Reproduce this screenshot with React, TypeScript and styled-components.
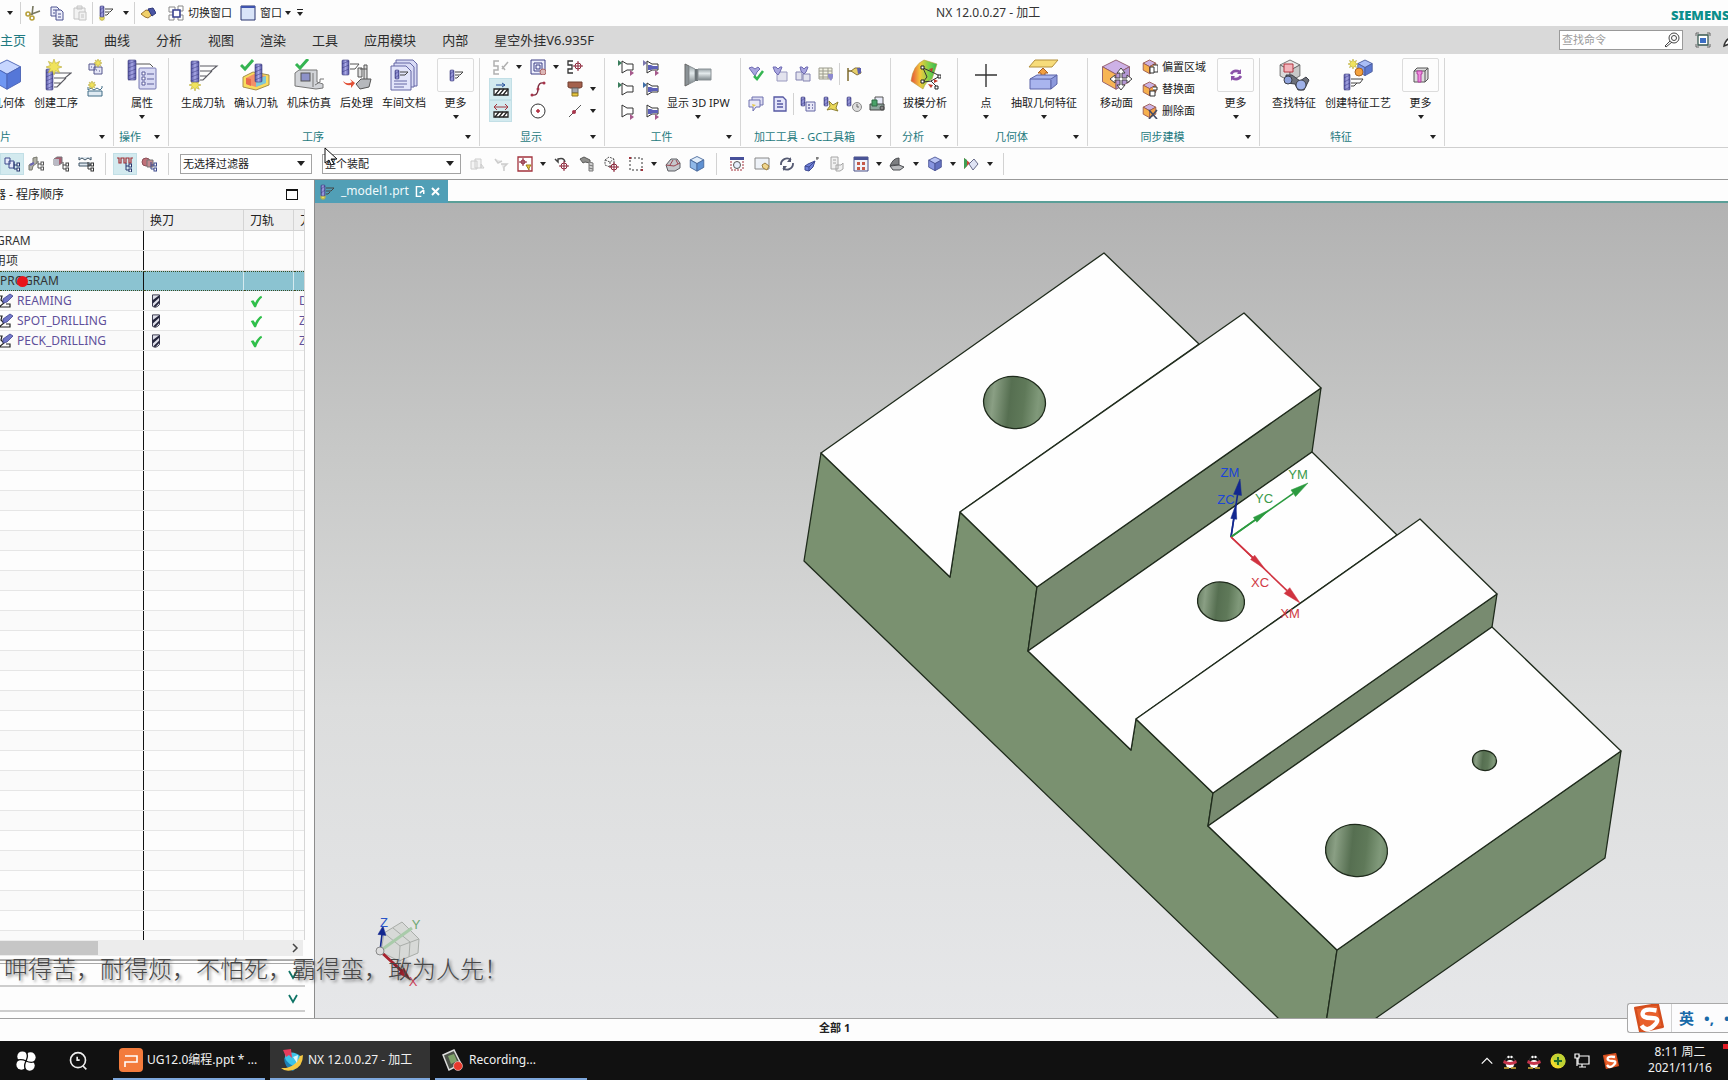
import React from "react";
import styled, { createGlobalStyle, css } from "styled-components";

const teal = "#1f7a80";
const ink = "#222";

const GlobalStyle = createGlobalStyle`
  * { box-sizing: border-box; }
  body {
    margin: 0;
    font-family: "Noto Sans", "Noto Sans CJK SC", sans-serif;
    font-size: 11px;
    line-height: 16px;
    color: ${ink};
    background: #fdfdfd;
  }
  button, input, select { font: inherit; color: inherit; }
`;

/* ---------- icons ---------- */

const Drill = ({ x, y, w = 7, h = 18 }: { x: number; y: number; w?: number; h?: number }) => (
  <g>
    <rect x={x} y={y} width={w} height={h} rx="1" fill="url(#steel)" stroke="#3d3d7c" strokeWidth=".6" />
    {Array.from({ length: Math.floor(h / 4) }, (_, i) => (
      <path key={i} d={`M${x} ${y + 4 + i * 4}l${w}-3`} stroke="#34347a" strokeWidth=".8" opacity=".6" />
    ))}
  </g>
);

const Path3 = ({ x, y }: { x: number; y: number }) => (
  <path
    d={`M${x} ${y}h17l-6 5h-11M${x + 12} ${y + 5}l-5 5h-7M${x + 7} ${y + 10}l-4 4h-3`}
    fill="none"
    stroke="#5a5a62"
    strokeWidth="1.1"
  />
);

const Star = ({ x, y, r = 6 }: { x: number; y: number; r?: number }) => {
  const pts = Array.from({ length: 16 }, (_, i) => {
    const a = (i * Math.PI) / 8;
    const q = i % 2 ? r * 0.5 : r;
    return `${x + q * Math.cos(a)},${y + q * Math.sin(a)}`;
  }).join(" ");
  return <polygon points={pts} fill="#f0e35c" stroke="#b9ab3a" strokeWidth=".6" />;
};

const Cube = ({ x, y, s, a, b, c, o = "#666" }: { x: number; y: number; s: number; a: string; b: string; c: string; o?: string }) => (
  <g stroke={o} strokeWidth=".9" strokeLinejoin="round">
    <path d={`M${x} ${y - s}l${s * 0.9} ${s * 0.45}l-${s * 0.9} ${s * 0.5}l-${s * 0.9}-${s * 0.5}z`} fill={a} />
    <path d={`M${x - s * 0.9} ${y - s * 0.55}v${s}l${s * 0.9} ${s * 0.5}v-${s}z`} fill={b} />
    <path d={`M${x + s * 0.9} ${y - s * 0.55}v${s}l-${s * 0.9} ${s * 0.5}v-${s}z`} fill={c} />
  </g>
);

const Tick = ({ x, y, s = 1 }: { x: number; y: number; s?: number }) => (
  <path d={`M${x} ${y + 5 * s}l${4 * s} ${4 * s}l${8 * s}-${9 * s}`} fill="none" stroke="#35b552" strokeWidth={3 * s} />
);

const Target = ({ x, y, r = 4 }: { x: number; y: number; r?: number }) => (
  <path
    d={`M${x - r - 1} ${y}h${2 * r + 2}M${x} ${y - r - 1}v${2 * r + 2}M${x - r + 1} ${y}a${r - 1} ${r - 1} 0 1 0 ${2 * r - 2} 0a${r - 1} ${r - 1} 0 1 0 -${2 * r - 2} 0`}
    fill="none"
    stroke="#8c2438"
  />
);

const Tree = ({ x, y, c = "#26366e" }: { x: number; y: number; c?: string }) => (
  <g fill="#fff" stroke={c}>
    <path d={`M${x + 1} ${y}v7h3M${x + 1} ${y + 3}h3`} fill="none" />
    <rect x={x + 4} y={y + 1} width="2.5" height="3" />
    <rect x={x + 4} y={y + 6} width="2.5" height="3" />
  </g>
);

const Nozzle = ({ fill, flag, tail = true }: { fill: string; flag?: string; tail?: boolean }) => (
  <g>
    {flag && <path d="M1 2l4 3-4 3z" fill={flag} />}
    <path d="M5 3l5 3h6v6h-6l-5 3z" fill="#fff" stroke="#333" />
    {fill !== "none" && <path d="M6 7h3l2 1h5v3h-5l-2 1H6z" fill={fill} />}
    {tail && <path d="M13 12l4 3-4 3z" fill="#a65a8c" />}
  </g>
);

const OrangeCube = ({ children }: { children?: React.ReactNode }) => (
  <g>
    <Cube x={7.5} y={8} s={7} a="#cbb1e2" b="#f6b04e" c="#f2a044" o="#9a5b52" />
    {children}
  </g>
);

const icons: Record<string, React.ReactNode> = {
  blueCube: <Cube x={14} y={16} s={15} a="#c7d6ff" b="#6f97f2" c="#5577d8" o="#4a62b4" />,
  createOp: (
    <>
      <Drill x={6} y={10} w={7} h={21} />
      <Path3 x={14} y={14} />
      <Star x={14} y={8} r={8} />
    </>
  ),
  props: (
    <>
      <path d="M8 5h16l3 3" stroke="#555" fill="none" />
      <Drill x={2} y={1} w={8} h={20} />
      <rect x="13" y="9" width="17" height="21" rx="1" fill="#d8daf4" stroke="#7577b0" />
      <path d="M16 13h3v3h-3zM16 18h3v3h-3zM16 23h3v3h-3z" fill="#fff" stroke="#5b5d9a" />
      <path d="M21 15h7M21 20h7M21 25h7" stroke="#5b5d9a" />
    </>
  ),
  genPath: (
    <>
      <Star x={8} y={26} r={6} />
      <Drill x={4} y={2} w={8} h={21} />
      <Path3 x={13} y={7} />
    </>
  ),
  verify: (
    <>
      <path d="M3 18l10-5 16 3v10l-13 5-13-3z" fill="#f9dc5c" stroke="#a58d4e" />
      <path d="M6 19l8-4 12 2v7l-10 4-10-3z" fill="#f2906a" />
      <path d="M16 28l10-4v-7l-10 3z" fill="#7fcbd8" />
      <path d="M6 19v6l5 2v-7z" fill="#e8694c" />
      <Drill x={15} y={5} w={7} h={18} />
      <Tick x={1} y={1} />
    </>
  ),
  machine: (
    <>
      <path d="M2 14l4-3h18v12l6 2v4l-7 1-21-3z" fill="#d2d4d8" stroke="#777" />
      <rect x="8" y="14" width="9" height="8" fill="#8d92c8" stroke="#555" />
      <path d="M20 14v14M22 26l5-3v-3h4" stroke="#777" fill="none" />
      <Tick x={3} y={0} />
    </>
  ),
  post: (
    <>
      <Drill x={1} y={1} w={7} h={15} />
      <path d="M9 5h9l-4 5H9" stroke="#555" fill="none" />
      <path d="M2 22q4 4 9 1l-2-3 5 4-4 5v-3q-6 1-8-4z" fill="#e25137" />
      <path d="M17 9h4v9h-4zM23 6h3v18h-3zM19 10h7" fill="#ddd" stroke="#555" />
      <path d="M15 25l5-5h10l-2 8-9 2z" fill="#b6b8bc" stroke="#555" />
    </>
  ),
  docs: (
    <>
      <path d="M8 1h17l4 4v22H8z" fill="#d9dbf5" stroke="#6567a4" />
      <path d="M6 4h16l4 4v20H6z" fill="#d9dbf5" stroke="#6567a4" />
      <path d="M3 7h15l5 5v19H3z" fill="#e2e4fa" stroke="#6567a4" />
      <path d="M6 22h13M6 25h13M6 28h10" stroke="#6567a4" />
      <Drill x={7} y={11} w={4} h={9} />
      <path d="M12 13h8l-3 3h-5" stroke="#444" fill="none" />
    </>
  ),
  moreOp: (
    <>
      <Drill x={2} y={3} w={4} h={11} />
      <path d="M7 5h8l-3 3H7M11 9l-2 2H7" stroke="#444" fill="none" />
    </>
  ),
  ipw: (
    <>
      <path d="M3 5l4 2v18l-4 2z" fill="#8b9296" stroke="#666" />
      <path d="M7 7l6 3v12l-6 3z" fill="url(#pipe)" stroke="#8b9296" />
      <path d="M13 10h3v12h-3z" fill="#6c7478" />
      <path d="M16 10h13v11H16z" fill="url(#pipe)" stroke="#8b9296" />
    </>
  ),
  draft: (
    <>
      <path d="M2 22Q4 6 15 1l13 4-5 15q-6 2-9 10z" fill="url(#rainbow)" stroke="#b99a3a" strokeWidth=".6" />
      <path d="M14 9l4 9-4 5M14 9l9 4 8 4-9 5 6 6M14 23l9-1" fill="none" stroke="#333" />
      <path d="M20 10l4-1-1 4zM25 20l4 2-4 2zM19 25l5 1-2 3z" fill="#c33b2c" />
      <path d="M12 7h3v3h-3zM12 21h3v3h-3zM29 16h3v3h-3zM26 27h3v3h-3z" fill="#fff" stroke="#222" />
    </>
  ),
  plus: <path d="M16 5v23M5 16h22" stroke="#333" strokeWidth="1.4" />,
  extract: (
    <>
      <path d="M7 1h23l-6 7H1z" fill="#f7dc7a" stroke="#b3903d" />
      <path d="M13 20v-6h-3l5-5 5 5h-3v6z" fill="#f2a040" stroke="#a85f22" />
      <path d="M2 20l7-4h20l-6 5v9H2z" fill="#a9b5ee" stroke="#5a63a6" />
      <path d="M2 20h21l6-4v9l-6 5v-9" fill="#8c99dc" stroke="#5a63a6" />
    </>
  ),
  moveFace: (
    <>
      <Cube x={15} y={16} s={15} a="#cdb1e6" b="#f7b555" c="#b397d4" o="#8d5a6a" />
      <path d="M20 9l4 5h-3v5h5v-3l5 4-5 4v-3h-5v5h3l-4 5-4-5h3v-5h-5v3l-5-4 5-4v3h5v-5h-3z" fill="#fff" stroke="#444" />
    </>
  ),
  find: (
    <>
      <Cube x={12} y={12} s={11} a="#e8e8e8" b="#dadada" c="#c8c8c8" />
      <path d="M6 5h9v8H6z" fill="#f3b4bb" stroke="#b1343f" />
      <path d="M8 16h6l8 6 6-4 3 3-5 10h-6l-3-6-8-1z" fill="#6d7079" stroke="#3c3f48" />
      <circle cx="10" cy="21" r="4" fill="#8fa3dc" stroke="#3c3f48" />
      <circle cx="23" cy="26" r="5" fill="#9fb1e8" stroke="#3c3f48" />
    </>
  ),
  createFeat: (
    <>
      <Cube x={23} y={9} s={8} a="#a9bdf5" b="#7c97e8" c="#5c78cf" o="#4b5c9c" />
      <circle cx="17" cy="13" r="4" fill="#f5a23d" stroke="#a66323" />
      <Star x={11} y={5} r={5} />
      <Drill x={2} y={15} w={6} h={16} />
      <path d="M9 20h12l-3 4H9M15 24l-3 3H9" stroke="#444" fill="none" />
    </>
  ),
  sync: (
    <g fill="none" stroke="#8b52a8" strokeWidth="2.6">
      <path d="M3 7q3-5 9-2" />
      <path d="M13 9q-3 5-9 2" />
      <path d="M13 2v5H9zM3 14V9h4z" fill="#8b52a8" stroke="none" />
    </g>
  ),
  pinkBox: (
    <>
      <path d="M1 4l3-3h11v11l-3 3H1z" fill="#ddd" stroke="#555" />
      <path d="M1 4h11v11M12 4l3-3" fill="none" stroke="#555" />
      <path d="M4 4h5v3H8v8H5V7H4z" fill="#f08be0" stroke="#b13fa0" />
    </>
  ),
  offset: <OrangeCube><path d="M8 8h4v6H8zM11 6h5v7h-4" fill="#fff" stroke="#333" /></OrangeCube>,
  replace: <OrangeCube><path d="M8 10h5v5H8zM11 6h4v3h-4" fill="#fff" stroke="#333" /></OrangeCube>,
  remove: <OrangeCube><path d="M7 7l8 9M15 7l-8 9" stroke="#444c66" strokeWidth="1.6" /></OrangeCube>,
  newGeom: (
    <>
      <path d="M2 5h6v6H2zM7 8h8v7H7z" fill="#e4e5f6" stroke="#55578c" />
      <path d="M9 11h1M12 12h1M4 8h1" stroke="#55578c" />
      <Star x={11} y={4} r={4} />
    </>
  ),
  newMethod: (
    <>
      <path d="M1 10h14v5H1z" fill="#dfeaf2" stroke="#416c86" />
      <path d="M1 6v3l3-2 3 2 3-2 3 2 2-2V5" fill="none" stroke="#416c86" />
      <Star x={5} y={4} r={4} />
    </>
  ),
  scissors: (
    <g fill="none" strokeWidth="1.6">
      <path d="M8 1l-1 9M15 6L4 10" stroke="#77775f" />
      <circle cx="3" cy="9" r="2" stroke="#b8a13c" />
      <circle cx="7" cy="13" r="2" stroke="#b8a13c" />
    </g>
  ),
  copy: (
    <g fill="#eceefb" stroke="#4d5390">
      <path d="M2 2h6l2 2v7H2z" />
      <path d="M7 5h5l2 2v8H7z" />
      <path d="M9 9h3M9 12h3M4 5h3M4 8h2" />
    </g>
  ),
  paste: (
    <g fill="#f2f2f2" stroke="#c4c4c4">
      <path d="M2 3h11v11H2zM5 1h5v3H5z" />
      <path d="M7 7h7v8H7zM9 10h3M9 12h3" />
    </g>
  ),
  mill: (
    <>
      <Star x={4} y={13} r={3} />
      <Drill x={2} y={1} w={4} h={11} />
      <path d="M7 4h8l-3 3H7M11 8l-2 2H7" stroke="#444" fill="none" />
    </>
  ),
  hand: (
    <>
      <path d="M1 9l5-4 4 1 2 4-4 3-3-1z" fill="#f0d06a" stroke="#9b7330" />
      <path d="M8 4l5-1 3 5-4 3z" fill="#4a55a4" stroke="#2e3878" />
    </>
  ),
  switchWin: (
    <g fill="#fff" stroke="#3a4390">
      <path d="M1 2h6v5H1zM10 1h5v5h-5zM1 10h5v5H1zM10 10h5v5h-5z" stroke="#888" />
      <path d="M5 5h7v7H5z" strokeWidth="1.6" />
    </g>
  ),
  window: (
    <>
      <path d="M1 1h14v14H1z" fill="#d9e4f8" stroke="#28346e" />
      <path d="M1 1h14v2H1z" fill="#3f54ae" />
    </>
  ),
  toolBrush: <path d="M6 2H1v5h4v4H1v4h5M9 10l6-7M9 7l3 4" fill="none" stroke="#b0b0b0" strokeWidth="1.5" />,
  spiral: (
    <>
      <path d="M1 1h14v14H1zM4 4h8v8H4zM6 6h4v4H6z" fill="#eceefc" stroke="#3d3f86" />
      <circle cx="13" cy="13" r="3" fill="#dcb6b6" stroke="#a66" />
    </>
  ),
  pathPoint: (
    <>
      <path d="M6 2H1v4h4v4H1v4h5" fill="none" stroke="#333" strokeWidth="1.3" />
      <Target x={11} y={7} />
    </>
  ),
  hatchOne: (
    <g stroke="#222">
      <path d="M3 4h9M9 2l3 2-3 2" fill="none" stroke="#26519c" />
      <path d="M1 8h14v6H1z" fill="#fff" strokeWidth="1.3" />
      <path d="M2 14l5-6M6 14l5-6M10 14l5-6" strokeWidth="1.3" />
    </g>
  ),
  hatchTwo: (
    <g stroke="#222">
      <path d="M1 4h14M4 1L1 4l3 3M12 1l3 3-3 3" fill="none" stroke="#a3343c" />
      <path d="M1 9h14v5H1z" fill="#fff" strokeWidth="1.3" />
      <path d="M2 14l4-5M6 14l4-5M10 14l4-5" strokeWidth="1.3" />
    </g>
  ),
  curve: (
    <>
      <path d="M2 14q6 1 6-6t6-6" fill="none" stroke="#7a2d3e" strokeWidth="1.4" />
      <g fill="#a8334a"><circle cx="2" cy="14" r="1.5" /><circle cx="8" cy="8" r="1.5" /><circle cx="14" cy="2" r="1.5" /></g>
    </>
  ),
  circle: (
    <>
      <circle cx="8" cy="8" r="7" fill="#fff" stroke="#333" />
      <path d="M6 8h4M8 6v4" stroke="#b02a3c" strokeWidth="1.5" />
    </>
  ),
  holder: (
    <>
      <path d="M1 1h14v5l-2 1H3L1 6z" fill="#a4614d" stroke="#713e30" />
      <path d="M5 7h6v5H5z" fill="#a2a5ad" stroke="#666" />
      <path d="M5 12h6v3H5z" fill="#e9c83e" stroke="#8d7520" />
    </>
  ),
  line: (
    <>
      <path d="M2 14L14 2" stroke="#555" />
      <circle cx="7" cy="9" r="2" fill="#a8334a" />
    </>
  ),
  gcCheck: (
    <>
      <path d="M1 2l3-1 3 2 3-2 2 2-3 3-2 4-3-4z" fill="#a9a6df" stroke="#6e6ab2" />
      <path d="M6 10l3 3 6-8" fill="none" stroke="#35b552" strokeWidth="2.5" />
    </>
  ),
  gcFolder: (
    <>
      <path d="M5 6h10v9H5z" fill="#e3e3ee" stroke="#9a9ac0" />
      <path d="M1 1h3l2 2 2-2h2L8 6l-2 3-3-3z" fill="#a9a6df" stroke="#6e6ab2" />
    </>
  ),
  gcSplit: (
    <>
      <path d="M1 6h6v8H1zM8 8h7v7H8z" fill="#e3e3ee" stroke="#8181b0" />
      <path d="M5 1h2l2 2 2-2h2l-2 5-2 2-3-3z" fill="#a9a6df" stroke="#6e6ab2" />
    </>
  ),
  gcTable: (
    <>
      <path d="M1 2h13v11H1zM1 5h13M1 8h13M1 11h13M5 2v11M10 2v11" fill="#f3f3e4" stroke="#9a9a8c" />
      <path d="M10 8h5v3l-2 4-3-4z" fill="#8d89cf" />
    </>
  ),
  flagHand: (
    <>
      <path d="M2 2v13M2 5h6" stroke="#7d6a2c" strokeWidth="1.5" fill="none" />
      <path d="M5 5l4-3h5l1 5-4 2z" fill="#e7cf6a" stroke="#857136" />
      <path d="M11 2h4v5l-3 1z" fill="#5b5fae" />
    </>
  ),
  gcChat: (
    <>
      <path d="M4 1h11v8H4z" fill="#dcdcf2" stroke="#6f70ae" />
      <path d="M1 4h11v7H8l-3 4v-4H1z" fill="#e8e8f7" stroke="#6f70ae" />
      <path d="M4 8l4 1-3 2z" fill="#e5c94a" />
    </>
  ),
  gcDoc: (
    <>
      <path d="M2 1h9l3 3v11H2z" fill="#e4e5fa" stroke="#5658a2" strokeWidth="1.3" />
      <path d="M5 5h4M5 8h6M5 11h6" stroke="#5658a2" strokeWidth="1.5" />
    </>
  ),
  gcCalc: (
    <>
      <Drill x={1} y={1} w={4} h={9} />
      <path d="M6 6h9v9H6z" fill="#e7e7f7" stroke="#6567a4" />
      <path d="M8 9h2M12 9h1M8 12h2M12 12h1" stroke="#6567a4" strokeWidth="1.5" />
    </>
  ),
  gcWrench: (
    <>
      <Drill x={1} y={1} w={4} h={9} />
      <path d="M6 5l4 4 5-3-2 6 2 3-7-2-4 1 3-4z" fill="#ead858" stroke="#8f8234" />
    </>
  ),
  gcClock: (
    <>
      <Drill x={1} y={1} w={4} h={9} />
      <circle cx="11" cy="11" r="4.5" fill="#ddd" stroke="#888" />
      <path d="M11 8v3h2" stroke="#666" fill="none" />
    </>
  ),
  gcPrint: (
    <>
      <path d="M6 1h8v8H6z" fill="#e8eaf8" stroke="#555" />
      <path d="M1 8h14v6H1z" fill="#8fa89e" stroke="#444" />
      <path d="M3 4h5v6H3z" fill="#49a268" stroke="#2f6b45" />
      <circle cx="13" cy="12" r="2" fill="#888" stroke="#444" />
    </>
  ),
  navGroup: (
    <>
      <path d="M1 2h5v6H1zM5 5h5v7H5z" fill="#e6e9fa" stroke="#3d4a8c" />
      <Tree x={9} y={6} />
    </>
  ),
  navTool: (
    <>
      <path d="M1 14V9l4-2V2l4-1v6l-4 3-1 4z" fill="#b2b2a8" stroke="#77776c" />
      <path d="M2 9l4-2" stroke="#6b66b2" strokeWidth="2" />
      <Tree x={9} y={5} c="#555" />
    </>
  ),
  navGeom: (
    <>
      <path d="M1 3l3-2h5v6l-3 2H1z" fill="#a75f70" stroke="#77777c" />
      <path d="M1 3h5v6H1z" fill="#b9b9c4" />
      <Tree x={9} y={6} c="#444" />
    </>
  ),
  navMethod: (
    <>
      <path d="M1 1v3l3-2 3 2 3-2 3 2V1M1 7h11v3H1z" fill="#dde6ee" stroke="#3f5566" />
      <Tree x={9} y={6} c="#333" />
    </>
  ),
  wave: (
    <>
      <path d="M0 2h2v5h2V2h3v5h2V2h3v5h2V2h2" fill="none" stroke="#a12e34" strokeWidth="1.2" />
      <Tree x={8} y={7} />
    </>
  ),
  redCube: (
    <>
      <circle cx="5" cy="6" r="4" fill="#c07078" stroke="#8c5058" />
      <path d="M6 4h6v7H6z" fill="#c58a90" stroke="#777" />
      <Tree x={9} y={6} c="#3d4a8c" />
    </>
  ),
  ghostA: <path d="M2 5h6v8H2zM6 3h6v9H6zM12 8l3 4h-3z" fill="#f4f4f4" stroke="#ccc" />,
  ghostB: <path d="M2 3l3 4 4-2M8 8h6l-3 3v4" fill="#e9e9e9" stroke="#ccc" strokeWidth="1.5" />,
  snapBox: (
    <>
      <path d="M1 1h14v14H1z" fill="#fff" stroke="#a3333d" strokeWidth="1.3" />
      <Target x={6} y={6} r={3} />
      <path d="M9 9h5l-2 3v2z" fill="#ecc93c" stroke="#9a7d1e" />
    </>
  ),
  snapTurn: (
    <>
      <path d="M1 3l3 3V3q6-2 7 3" fill="none" stroke="#444" strokeWidth="1.5" />
      <Target x={10} y={10} />
    </>
  ),
  drillGray: (
    <>
      <path d="M1 3l4-2 6 3v3L6 6 4 7z" fill="#8f8f8c" stroke="#5a5a58" />
      <path d="M10 6l4 1v8h-4z" fill="#d0d0d0" stroke="#777" />
      <path d="M10 9l4 1M10 12l4 1" stroke="#777" />
    </>
  ),
  cubeTarget: (
    <>
      <path d="M2 4l4-3 5 2v5l-4 3-5-2zM2 4l5 2 4-3M7 6v5" fill="none" stroke="#555" strokeDasharray="2 1" />
      <Target x={11} y={11} />
    </>
  ),
  marquee: (
    <>
      <path d="M2 2h12v12H2z" fill="none" stroke="#333" strokeDasharray="2 2" />
      <path d="M1 1h2v2H1zM13 13h2v2h-2z" fill="#a3333d" />
    </>
  ),
  shoe: (
    <>
      <path d="M1 9l5-6h6l3 4v5l-5 3H3z" fill="#c6c8cc" stroke="#5c5e64" />
      <path d="M1 9l8 1 6-3M8 4l-3 5M11 4l2 4" stroke="#9a4650" fill="none" />
    </>
  ),
  glassCube: <Cube x={8} y={8} s={7.5} a="#e2eefb" b="#8fb8e8" c="#5f91d2" o="#4a6a9c" />,
  fit: (
    <>
      <path d="M1 1h14v3H1z" fill="#47509a" />
      <path d="M2 5v9M14 5v9M2 14h12" stroke="#a3333d" strokeDasharray="2 1" fill="none" />
      <circle cx="8" cy="9" r="3.5" fill="#e6eefb" stroke="#555" />
    </>
  ),
  pan: (
    <>
      <path d="M1 2h14v11H1z" fill="#eef2f8" stroke="#888" />
      <path d="M8 9l3-2 4 3-2 4-4-2z" fill="#f0d58c" stroke="#9d8040" />
    </>
  ),
  rotate: (
    <g fill="none" stroke="#555a72" strokeWidth="1.8">
      <path d="M2 9a6 6 0 0 1 10-5M14 7a6 6 0 0 1-10 5" />
      <path d="M12 1v5h-4zM4 15v-5h4z" fill="#555a72" stroke="none" />
    </g>
  ),
  bluePrism: (
    <>
      <path d="M1 10l3-2 7-3-2 6-4 4-4-1z" fill="#6f80d8" stroke="#3f4b94" />
      <path d="M1 10l4 1v4M5 11l6-6" fill="none" stroke="#3f4b94" />
      <path d="M13 1v3M12 2h3" stroke="#555" />
    </>
  ),
  ghostDoc: <path d="M2 1h7v12H2zM4 4h3M4 7h3M7 9h5l2-2v6l-3 2H7z" fill="#f1f1f1" stroke="#a6a6a6" />,
  grid: (
    <>
      <path d="M1 1h14v14H1z" fill="#f1f3fa" stroke="#4a5088" />
      <path d="M1 1h14v3H1z" fill="#4a5496" />
      <path d="M4 6h3v3H4zM9 6h3v3H9zM4 11h3v3H4zM9 11h3v3H9z" fill="#c55a4a" />
    </>
  ),
  shade: (
    <>
      <path d="M1 10Q4 2 10 2v7H4z" fill="#7d7f82" stroke="#4a4c50" />
      <path d="M1 10l9-1 5 2-4 3H4z" fill="#b8babd" stroke="#4a4c50" />
    </>
  ),
  solid: <Cube x={8} y={8} s={7} a="#b9c4f4" b="#8795e0" c="#6472c0" o="#4c5696" />,
  clip: (
    <>
      <path d="M1 2l6 5-6 6z" fill="#c94338" />
      <path d="M1 2l3 2v6l-3 3z" fill="#3f9d52" />
      <path d="M6 8l5-5 4 5-5 6z" fill="#dfe3f4" stroke="#666a88" />
    </>
  ),
  opRow: (
    <>
      <path d="M1 3h4l-1 4 3 3-5 4h11v-3H9" fill="none" stroke="#222" strokeWidth="1.2" />
      <path d="M6 10V6l7-5 3 2-6 6z" fill="#7176c8" stroke="#3f438e" strokeWidth=".8" />
    </>
  ),
  tool: (
    <>
      <path d="M4 1h8v11q-4 5-8 2z" fill="#dfe0ea" stroke="#25253c" />
      <path d="M4 7l8-6v3l-8 7zM5 14l7-7v3l-5 5z" fill="#25253c" />
    </>
  ),
  done: <path d="M2 8l3-1 2 3q3-6 7-8l1 2q-4 3-7 11H6z" fill="#2fbf4a" />,
  fullscreen: (
    <>
      <path d="M1 4V1h3M12 1h3v3M15 12v3h-3M4 15H1v-3" fill="none" stroke="#666" />
      <path d="M3 3h10v10H3z" fill="#fff" stroke="#3a5a52" strokeWidth="1.3" />
      <path d="M5 6h6v5H5z" fill="#3c6ec4" />
    </>
  ),
  pen: <path d="M1 14q1-6 7-9l4-4 3 3-5 7-4 1z" fill="#fff" stroke="#333" strokeWidth="1.5" />,
  magnifier: (
    <g fill="none" stroke="#444">
      <circle cx="10" cy="6" r="5" /><circle cx="10" cy="6" r="2.5" />
      <path d="M6 9l-5 5 1 1 6-5" />
    </g>
  ),
  pin: (
    <path d="M9 14H3V2h6l3 3M7 10l5-4M12 6v5" fill="none" stroke="#fff" strokeWidth="1.8" />
  ),
  start: (
    <>
      <g fill="#fff">
        <circle cx="8" cy="7" r="5.5" /><circle cx="17" cy="8" r="5.5" />
        <circle cx="16" cy="17" r="5.5" /><circle cx="7" cy="16" r="5.500" />
      </g>
      <g fill="none" stroke="#111" strokeWidth="1.5">
        {[0, 90, 180, 270].map((a) => (
          <path key={a} d="M12 12Q15 6 12 1" transform={`rotate(${a} 12 12)`} />
        ))}
      </g>
    </>
  ),
  searchTask: (
    <g fill="none" stroke="#eee" strokeWidth="2">
      <circle cx="12" cy="11" r="9" />
      <path d="M18 18l4 4M11 7v4h3" />
    </g>
  ),
  ppt: (
    <>
      <rect width="24" height="24" rx="4" fill="#f37b3c" />
      <path d="M6 8h12v6H6v5" fill="none" stroke="#fff" strokeWidth="1.6" />
    </>
  ),
  nx: (
    <>
      <path d="M5 6q9-4 15 2 1 11-7 14Q4 19 5 6z" fill="#3cc3e8" />
      <path d="M4 9q5 9 13 10l-4 4Q4 20 4 9z" fill="#1c7fb4" />
      <path d="M1 20q14 1 19-12l3-1q0 12-10 15-8 2-12-2z" fill="#f5c842" />
      <path d="M3 2l8-1 1 9-3-3-3 2z" fill="#e63b5c" />
      <path d="M13 9l5-2-1 8z" fill="#d9f4fb" />
    </>
  ),
  rec: (
    <>
      <path d="M2 7L13 2l7 14-12 6z" fill="#4c5148" stroke="#ddd" strokeWidth="1.5" />
      <path d="M7 8l6-2 3 7-6 3z" fill="#7fa36a" />
      <circle cx="17" cy="18" r="4.5" fill="#e8392c" stroke="#fff" strokeWidth=".5" />
    </>
  ),
  chevronUp: <path d="M2 11l6-6 6 6" fill="none" stroke="#fff" strokeWidth="1.4" />,
  penguin: (
    <>
      <ellipse cx="8" cy="9" rx="5" ry="6" fill="#111" stroke="#555" strokeWidth=".5" />
      <ellipse cx="8" cy="11" rx="4" ry="4" fill="#fff" />
      <path d="M2 7q6 4 12 0l1 3q-7 4-14 0z" fill="#c6344c" />
      <circle cx="6.5" cy="4" r="1.2" fill="#fff" /><circle cx="9.5" cy="4" r="1.2" fill="#fff" />
      <path d="M2 15h5M9 15h5" stroke="#d9b13a" strokeWidth="1.5" />
    </>
  ),
  guard: (
    <>
      <circle cx="8" cy="8" r="7.5" fill="#f1d92c" />
      <path d="M8 1a7 7 0 0 1 4 13Q4 12 2 5 4 1 8 1z" fill="#a9cf38" opacity=".7" />
      <path d="M8 4v8M4 8h8" stroke="#1e6a2c" strokeWidth="2" />
    </>
  ),
  network: (
    <g fill="#111" stroke="#fff" strokeWidth="1.2">
      <path d="M4 3h11v8H4zM8 11v3M5 14h7" />
      <path d="M1 1h4v4H1zM3 5v8" />
    </g>
  ),
  sogou: (
    <>
      <path d="M1 4L19 1l4 18-18 4z" fill="#e8602c" stroke="#d44e1e" strokeLinejoin="round" strokeWidth="2" />
      <path d="M18 6q-10-2-11 2t7 4 2 6-10 0" fill="none" stroke="#fff" strokeWidth="3.5" />
    </>
  ),
};

["Plain", "Filled"].forEach((kind) => {
  const fill = kind === "Plain" ? "none" : "#5d60b8";
  icons[`part${kind}`] = <Nozzle fill={fill} flag={kind === "Plain" ? "#3a7d5c" : "#7c78b0"} />;
  icons[`check${kind}`] = <Nozzle fill={fill} flag={kind === "Plain" ? "#3a7d5c" : "#3f6ea8"} tail={false} />;
  icons[`blank${kind}`] = <Nozzle fill={fill} />;
});

const partTools = ["partPlain", "partFilled", "checkPlain", "checkFilled", "blankPlain", "blankFilled"];
const large = new Set("blueCube createOp props genPath verify machine post docs ipw draft plus extract moveFace find createFeat".split(" "));
const task = new Set("start searchTask ppt nx rec sogou".split(" "));
const artboard = (name: string) => (large.has(name) ? 32 : task.has(name) ? 24 : partTools.includes(name) ? 18 : 16);

const Icon = ({ name, size = 16 }: { name: string; size?: number }) => (
  <svg width={size} height={size} viewBox={`0 0 ${artboard(name)} ${artboard(name)}`} aria-hidden="true">
    {icons[name]}
  </svg>
);

const PaintSvg = styled.svg`position: absolute; width: 0; height: 0;`;

const SharedPaints = () => (
  <PaintSvg aria-hidden="true">
    <defs>
      <linearGradient id="steel">
        <stop offset="0" stopColor="#5656a4" /><stop offset=".5" stopColor="#a9a9e6" /><stop offset="1" stopColor="#5656a4" />
      </linearGradient>
      <linearGradient id="pipe" x2="0" y2="1">
        <stop offset="0" stopColor="#9aa4a8" /><stop offset=".4" stopColor="#e3eaec" /><stop offset="1" stopColor="#7e878b" />
      </linearGradient>
      <linearGradient id="rainbow">
        <stop offset="0" stopColor="#e44d3a" /><stop offset=".35" stopColor="#f3c83c" /><stop offset=".7" stopColor="#7bd24a" /><stop offset="1" stopColor="#35b552" />
      </linearGradient>
      <linearGradient id="bore">
        <stop offset="0" stopColor="#6a8065" /><stop offset=".15" stopColor="#8a9f84" /><stop offset=".42" stopColor="#566f51" />
        <stop offset=".65" stopColor="#5f7959" /><stop offset=".88" stopColor="#80997a" /><stop offset="1" stopColor="#748d6d" />
      </linearGradient>
    </defs>
  </PaintSvg>
);

/* ---------- styled parts ---------- */

const Window = styled.div`
  position: relative;
  display: flex;
  flex-direction: column;
  height: 100vh;
  overflow: hidden;
  svg { display: block; flex: none; }
`;

const bareButton = css`
  border: 0;
  padding: 0;
  background: none;
  white-space: nowrap;
`;

const TitleBar = styled.header`
  display: grid;
  grid-template-columns: 54% auto 1fr;
  align-items: center;
  height: 26px;
  flex: none;
`;

const QuickBar = styled.div`display: flex; align-items: center; height: 24px;`;

const Title = styled.h1`
  margin: 0;
  padding-left: 3px;
  font-size: 12px;
  font-weight: 400;
  color: #333;
`;

const Brand = styled.div`
  justify-self: end;
  width: 57px;
  overflow: hidden;
  font-size: 13px;
  font-weight: 900;
  color: #0c8f8c;
  padding-top: 3px;
`;

const TabStrip = styled.nav`
  display: flex;
  align-items: stretch;
  height: 28px;
  flex: none;
  background: #d9d9d9;
  font-size: 13px;
`;

const Tab = styled.button<{ $on?: boolean }>`
  ${bareButton}
  padding: 0 13px;
  color: ${(p) => (p.$on ? teal : "#2c2c2c")};
  ${(p) => p.$on && "padding-left: 0; background: #fdfdfd;"}
`;

const SearchTools = styled.div`
  display: flex;
  align-items: center;
  gap: 12px;
  margin-left: auto;
  width: 169px;
  overflow: hidden;
`;

const SearchBox = styled.label`
  display: flex;
  align-items: center;
  flex: none;
  width: 124px;
  height: 20px;
  padding: 0 2px;
  border: 1px solid #9a9a9a;
  background: #fff;
`;

const SearchInput = styled.input`
  flex: 1;
  min-width: 0;
  border: 0;
  padding: 0;
  background: none;
  font-size: 11px;
  outline: none;
  &::placeholder { color: #9c9c9c; }
`;

const Ribbon = styled.div`
  display: flex;
  height: 94px;
  flex: none;
  padding-top: 4px;
  border-bottom: 1px solid #cfcfcf;
`;

const Group = styled.section<{ $w: number }>`
  display: flex;
  flex-direction: column;
  flex: none;
  width: ${(p) => p.$w}px;
  margin-bottom: 1px;
  border-right: 1px solid #d6d6d6;
`;

const GroupBody = styled.div<{ $pad?: number; $gap?: number }>`
  display: flex;
  flex: 1;
  gap: ${(p) => p.$gap ?? 9}px;
  padding-left: ${(p) => p.$pad ?? 12}px;
  min-width: 0;
`;

const GroupFooter = styled.div`
  display: flex;
  align-items: center;
  height: 18px;
  color: ${teal};
`;

const GroupName = styled.span<{ $left?: boolean }>`
  flex: 1;
  text-align: ${(p) => (p.$left ? "left" : "center")};
  white-space: nowrap;
`;

const CaretMark = styled.span`
  display: block;
  width: 0;
  border: 3px solid transparent;
  border-top: 4px solid #222;
  border-bottom: 0;
`;

const CaretButton = styled.button<{ $w?: number }>`
  ${bareButton}
  display: grid;
  place-items: center;
  flex: none;
  width: ${(p) => p.$w ?? 20}px;
  height: 16px;
`;

const BigBtn = styled.button<{ $shift?: boolean; $boxed?: boolean }>`
  ${bareButton}
  display: flex;
  flex-direction: column;
  align-items: center;
  flex: none;
  height: 66px;
  ${(p) => p.$shift && "margin-left: -8px;"}
  ${(p) => p.$boxed && "margin-left: 2px;"}
`;

const BigIcon = styled.span<{ $boxed?: boolean }>`
  display: grid;
  place-items: center;
  width: ${(p) => (p.$boxed ? 37 : 32)}px;
  height: 34px;
  margin-bottom: 3px;
  border-radius: 2px;
  ${(p) => p.$boxed && "border: 1px solid #dcdcdc;"}
`;

const BigLabel = styled.span`line-height: 16px; margin-bottom: 4px;`;

const IconColumn = styled.div`display: flex; flex-direction: column; gap: 6px; padding-top: 1px;`;

const SmallBtn = styled.button<{ $on?: boolean; $w?: number; $h?: number }>`
  ${bareButton}
  display: flex;
  align-items: center;
  justify-content: center;
  gap: 4px;
  flex: none;
  width: ${(p) => (p.$w ? `${p.$w}px` : "auto")};
  height: ${(p) => p.$h ?? 22}px;
  ${(p) => p.$on && "background: #d3eaef; box-shadow: inset 0 0 0 1px #c2dfe6;"}
`;

const DisplayGrid = styled.div`
  display: grid;
  grid-template-columns: 37px 37px 37px;
  grid-auto-rows: 22px;
  margin-top: -2px;
`;

const Cell = styled.div`display: flex; align-items: center;`;

const PartGrid = styled.div`
  display: grid;
  grid-template-columns: 25px 25px;
  grid-auto-rows: 22px;
  margin-top: -2px;
`;

const GcRows = styled.div`display: flex; flex-direction: column; gap: 8px; padding-top: 5px;`;
const GcRow = styled.div`display: flex; align-items: center;`;

const Divider = styled.span<{ $h?: number; $m?: number }>`
  flex: none;
  width: 1px;
  height: ${(p) => p.$h ?? 22}px;
  margin: 0 ${(p) => p.$m ?? 8}px;
  background: #d2d2d2;
`;

const QuickLabel = styled(SmallBtn)`height: 20px; margin-left: 8px;`;

const SelectionBar = styled.div`
  display: flex;
  align-items: center;
  height: 32px;
  flex: none;
  border-bottom: 1px solid #999;
`;

const Filters = styled.div`display: flex; gap: 10px; margin: 0 4px;`;

const SelectWrap = styled.label<{ $w: number }>`
  display: grid;
  grid-template-columns: 1fr 20px;
  align-items: center;
  justify-items: center;
  width: ${(p) => p.$w}px;
  height: 20px;
  border: 1px solid #a3a3a3;
  background: #fff;
`;

const Select = styled.select`
  grid-area: 1 / 1 / 2 / 3;
  width: 100%;
  height: 18px;
  padding: 0 2px;
  border: 0;
  background: none;
  appearance: none;
`;

const SelectCaret = styled.span`
  grid-area: 1 / 2 / 2 / 3;
  border: 4px solid transparent;
  border-top: 5px solid #222;
  border-bottom: 0;
  pointer-events: none;
`;

const Workspace = styled.div`display: flex; flex: 1; min-height: 0;`;

const Navigator = styled.aside`
  display: flex;
  flex-direction: column;
  flex: none;
  width: 315px;
  border-right: 1px solid #8c8c8c;
  overflow: hidden;
`;

const NavTitle = styled.div`
  display: flex;
  align-items: center;
  justify-content: space-between;
  height: 29px;
  flex: none;
  padding-right: 16px;
  font-size: 12px;
  h2 { margin: 0 0 0 -6px; font: inherit; }
`;

const MaximizeButton = styled.button`
  width: 12px;
  height: 11px;
  padding: 0;
  border: 1px solid #111;
  border-top-width: 2px;
  background: none;
`;

const TreeArea = styled.div`
  flex: 1;
  min-height: 0;
  width: 305px;
  overflow: hidden;
  border-top: 1px solid #cfcfcf;
  border-right: 1px solid #d6d6d6;
`;

const TreeTable = styled.table`
  width: 304px;
  table-layout: fixed;
  border-collapse: separate;
  border-spacing: 0;
  font-size: 12px;
`;

const Th = styled.th`
  height: 21px;
  padding: 2px 6px 0;
  overflow: hidden;
  white-space: nowrap;
  text-align: left;
  font-weight: 400;
  background: #efefef;
  border-right: 1px solid #d4d4d4;
  border-bottom: 1px solid #d4d4d4;
  &:last-child { border-right: 0; }
`;

const Td = styled.td`
  height: 20px;
  padding: 0 5px;
  overflow: hidden;
  white-space: nowrap;
  line-height: 16px;
  border-right: 1px solid #e3e3e3;
  border-bottom: 1px solid #e6e6e6;
  &:first-child { padding: 0; border-right: 0; box-shadow: inset -1px 0 0 #111; }
  &:last-child { border-right: 0; }
`;

const Tr = styled.tr<{ $kind?: "group" | "selected" | "op" }>`
  color: ${(p) => (p.$kind === "op" ? "#60509a" : "#333")};
  &:nth-child(even) { background: #fafafa; }
  ${(p) => p.$kind === "selected" && css`
    background: #8bc3d1;
    ${Td} {
      border-top: 1px dotted #3c4a20;
      border-bottom: 1px dotted #3c4a20;
      border-right-color: #d5eaef;
    }
  `}
`;

const RowName = styled.span<{ $cut?: number }>`
  display: flex;
  align-items: center;
  gap: 4px;
  margin-left: -${(p) => p.$cut ?? 0}px;
`;

const ScrollTrack = styled.div`
  display: flex;
  align-items: center;
  justify-content: space-between;
  flex: none;
  width: 303px;
  height: 16px;
  background: #ececec;
`;
const ScrollThumb = styled.div`width: 98px; height: 14px; background: #c6c6c6;`;
const ScrollArrow = styled.button`
  ${bareButton}
  width: 16px;
  height: 16px;
  display: grid;
  place-items: center;
`;

const Drawers = styled.div`
  flex: none;
  width: 305px;
  margin: 3px 0 6px;
  border-top: 1px solid #b5b5b5;
`;

const Drawer = styled.button`
  ${bareButton}
  display: flex;
  align-items: center;
  justify-content: flex-end;
  width: 100%;
  height: 25px;
  padding-right: 6px;
  border-bottom: 2px solid #cdcdcd;
  &:first-child { height: 27px; border-top: 4px double #a8a8a8; }
`;

const Stage = styled.main`display: flex; flex-direction: column; flex: 1; min-width: 0;`;

const FileTabs = styled.div`
  display: flex;
  height: 23px;
  flex: none;
  border-bottom: 2px solid #5a9f98;
`;

const FileTab = styled.div`
  display: flex;
  align-items: center;
  height: 23px;
  width: 133px;
  padding-left: 4px;
  background: #519fb6;
  color: #f2fafc;
  font-size: 12px;
`;

const FileName = styled.span`margin: 0 5px 2px 6px;`;

const Viewport = styled.div`
  flex: 1;
  min-height: 0;
  overflow: hidden;
  background: linear-gradient(#b2b2b2, #c7c8c7 30%, #dcdddd 62%, #e6e7e9);
  > svg { width: 100%; height: 100%; }
`;

const StatusBar = styled.footer`
  height: 23px;
  flex: none;
  padding: 1px 0 0 47.4%;
  border-top: 1px solid #a0a0a0;
  font-weight: 700;
`;

const Taskbar = styled.footer`
  display: flex;
  align-items: center;
  height: 39px;
  flex: none;
  background: #111;
  color: #f1f1f1;
  font-size: 12px;
`;

const RoundTask = styled.button`
  ${bareButton}
  display: grid;
  place-items: center;
  width: 52px;
`;

const TaskButtons = styled.div`display: flex; gap: 5px; margin-left: 9px;`;

const TaskButton = styled.button<{ $on?: boolean; $w: number }>`
  ${bareButton}
  display: flex;
  align-items: center;
  gap: 4px;
  width: ${(p) => p.$w}px;
  height: 39px;
  padding-left: ${(p) => (p.$on ? 10 : 6)}px;
  border-bottom: 2px solid #7da7dc;
  background: ${(p) => (p.$on ? "#333" : "none")};
`;

const Tray = styled.div`
  display: flex;
  align-items: center;
  gap: 13px;
  margin-left: auto;
`;

const TrayIcons = styled.div`display: flex; align-items: center; gap: 8px;`;

const Clock = styled.time`
  width: 96px;
  text-align: center;
  line-height: 16px;
  padding-bottom: 2px;
`;

const ImeBar = styled.div`
  position: absolute;
  right: 0;
  bottom: 47px;
  display: flex;
  align-items: center;
  width: 101px;
  height: 30px;
  padding-left: 6px;
  overflow: hidden;
  border: 1px solid #a9a9a9;
  border-right: 0;
  border-radius: 3px 0 0 3px;
  background: #fcfcfd;
  color: #1869a8;
  font-size: 15px;
  font-weight: 700;
`;

const ImeMode = styled.button`${bareButton} margin-right: 10px;`;

const Caption = styled.p`
  position: absolute;
  left: 4px;
  bottom: 98px;
  margin: 0;
  font-size: 24px;
  line-height: 28px;
  font-family: "Noto Sans CJK SC", sans-serif;
  font-weight: 300;
  color: #484848;
  text-shadow: 2px 2px 3px rgba(0, 0, 0, 0.45);
  white-space: nowrap;
  pointer-events: none;
`;

const Pointer = styled.svg`position: absolute; left: 324px; top: 147px;`;
const ClickDot = styled.span`
  position: absolute;
  left: 17px;
  top: 276px;
  width: 11px;
  height: 11px;
  border-radius: 50%;
  background: #e8141b;
`;
const NoticeDot = styled.span`
  position: absolute;
  right: 0;
  bottom: 31px;
  width: 5px;
  height: 5px;
  background: #e01b24;
`;

/* ---------- composed parts ---------- */

const Big = ({ icon, label, caret, boxed, shift }: { icon: string; label: string; caret?: boolean; boxed?: boolean; shift?: boolean }) => (
  <BigBtn $shift={shift} $boxed={boxed}>
    <BigIcon $boxed={boxed}><Icon name={icon} size={boxed ? 16 : 32} /></BigIcon>
    <BigLabel>{label}</BigLabel>
    {caret && <CaretMark />}
  </BigBtn>
);

const RibbonGroup = ({ w, name, pad, gap, left, children }: { w: number; name: string; pad?: number; gap?: number; left?: boolean; children: React.ReactNode }) => (
  <Group $w={w} aria-label={name}>
    <GroupBody $pad={pad} $gap={gap}>{children}</GroupBody>
    <GroupFooter>
      <GroupName $left={left}>{name}</GroupName>
      <CaretButton $w={22} aria-label={`${name} 选项`}><CaretMark /></CaretButton>
    </GroupFooter>
  </Group>
);

const Tool = ({ icon, w = 24, on, caret }: { icon: string; w?: number; on?: boolean; caret?: number }) => (
  <>
    <SmallBtn $w={w} $on={on} aria-label={icon}><Icon name={icon} /></SmallBtn>
    {caret && <CaretButton $w={caret} aria-label={`${icon} menu`}><CaretMark /></CaretButton>}
  </>
);

const tabs = ["主页", "装配", "曲线", "分析", "视图", "渲染", "工具", "应用模块", "内部", "星空外挂V6.935F"];
const displayTools: [string, boolean, boolean?][] = [
  ["toolBrush", true], ["spiral", true], ["pathPoint", false],
  ["hatchOne", false, true], ["curve", false], ["holder", true],
  ["hatchTwo", false, true], ["circle", false], ["line", true],
];

const Arrow = ({ x1, y1, x2, y2, c, len = 13, wide = 4 }: { x1: number; y1: number; x2: number; y2: number; c: string; len?: number; wide?: number }) => {
  const d = Math.hypot(x2 - x1, y2 - y1);
  const ux = (x2 - x1) / d;
  const uy = (y2 - y1) / d;
  const bx = x2 - ux * len;
  const by = y2 - uy * len;
  return (
    <g fill={c} stroke={c}>
      <path d={`M${x1} ${y1}L${bx} ${by}`} strokeWidth="1.6" />
      <path d={`M${x2} ${y2}L${bx - uy * wide} ${by + ux * wide}L${bx + uy * wide} ${by - ux * wide}z`} strokeWidth=".5" />
    </g>
  );
};

const holes = [
  { x: 1014.5, y: 402.5, rx: 31, ry: 26 },
  { x: 1221, y: 601.5, rx: 23.5, ry: 19.5 },
  { x: 1484.5, y: 760.5, rx: 12, ry: 10 },
  { x: 1356.5, y: 850.5, rx: 31, ry: 26 },
];

const Scene = () => (
  <svg viewBox="315 203 1413 815" preserveAspectRatio="xMinYMin slice" role="img" aria-label="model1">
    <g stroke="#1f2b1c" strokeWidth="1.3" strokeLinejoin="round">
      <path d="M821 453L804 561L1276 1016L1290 1030H1325L1337 950L1208 826L1213 793L1136 719L1131 750L1028 651L1037 587L960 512L950 577z" fill="#7a9170" />
      <path d="M1337 950L1621 751L1605 858L1379 1016L1360 1030H1325z" fill="#778d6f" />
      <path d="M1104 253L821 453L950 577L960 512L1199 344z" fill="#fefefe" />
      <path d="M1037 587L1321 388L1312 452L1028 651z" fill="#788b70" />
      <path d="M1244 313L960 512L1037 587L1321 388z" fill="#fefefe" />
      <path d="M1312 452L1028 651L1131 750L1136 719L1397 535z" fill="#fefefe" />
      <path d="M1213 793L1497 594L1492 627L1208 826z" fill="#788b70" />
      <path d="M1420 519L1136 719L1213 793L1497 594z" fill="#fefefe" />
      <path d="M1492 627L1208 826L1337 950L1621 751z" fill="#fefefe" />
    </g>
    {holes.map((h) => (
      <ellipse key={h.x} cx={h.x} cy={h.y} rx={h.rx} ry={h.ry} fill="url(#bore)" stroke="#1f2b1c" strokeWidth="1.3" transform={`rotate(6 ${h.x} ${h.y})`} />
    ))}
    <Arrow x1={1231} y1={537} x2={1240} y2={479} c="#12278f" len={16} />
    <Arrow x1={1231} y1={537} x2={1236} y2={504} c="#12278f" len={15} wide={3} />
    <Arrow x1={1231} y1={537} x2={1308} y2={483} c="#2b9a3f" len={18} />
    <Arrow x1={1231} y1={537} x2={1269} y2={510} c="#2b9a3f" len={17} wide={3} />
    <Arrow x1={1231} y1={537} x2={1300} y2={603} c="#d03340" len={18} />
    <Arrow x1={1231} y1={537} x2={1265} y2={569} c="#d03340" len={17} wide={3} />
    <g fontFamily='"Liberation Sans", sans-serif' fontSize="13" textAnchor="middle">
      <g fill="#1c45d8"><text x="1230" y="477">ZM</text><text x="1226" y="504">ZC</text></g>
      <g fill="#3a9a4a"><text x="1298" y="479">YM</text><text x="1264" y="503">YC</text></g>
      <g fill="#d03a45"><text x="1260" y="587">XC</text><text x="1290" y="618">XM</text></g>
    </g>
    <g stroke="#a9ada9" fill="#d3d6d3" fillOpacity=".8">
      <path d="M402 922L419 939L418 953L399 961L381 952L384 933z" />
      <path d="M384 933L400 946L419 939M400 946L399 961M393 928L410 942L409 957" fill="none" />
    </g>
    <path d="M380 951L412 928" stroke="#a9cbaa" strokeWidth="3" />
    <Arrow x1={380} y1={951} x2={383} y2={926} c="#12278f" len={9} wide={4} />
    <path d="M380 951L404 973" stroke="#a82430" strokeWidth="3" />
    <Arrow x1={380} y1={951} x2={410} y2={979} c="#a82430" len={12} wide={4} />
    <circle cx="380" cy="951" r="4" fill="#ddd" stroke="#888" />
    <g fontFamily='"Liberation Sans", sans-serif' fontSize="13" textAnchor="middle">
      <text x="384" y="927" fill="#2a55c8">Z</text>
      <text x="416" y="929" fill="#6fa873">Y</text>
      <text x="413" y="986" fill="#d0405a">X</text>
    </g>
  </svg>
);

const operations = [["REAMING", "D"], ["SPOT_DRILLING", "Z"], ["PECK_DRILLING", "Z"]];

export default function App() {
  return (
    <Window>
      <GlobalStyle />
      <SharedPaints />

      <TitleBar>
        <QuickBar>
          <CaretButton aria-label="更多命令"><CaretMark /></CaretButton>
          <Divider $m={0} />
          <Tool icon="scissors" />
          <Tool icon="copy" w={23} />
          <Tool icon="paste" w={23} />
          <Divider $m={1} />
          <Tool icon="mill" caret={15} />
          <Divider $m={1} />
          <Tool icon="hand" />
          <QuickLabel><Icon name="switchWin" />切换窗口</QuickLabel>
          <QuickLabel><Icon name="window" />窗口</QuickLabel>
          <CaretButton $w={12} aria-label="窗口菜单"><CaretMark /></CaretButton>
          <CaretButton $w={12} aria-label="自定义"><svg width="8" height="8" viewBox="0 0 8 8"><path d="M1 0h6v1H1zM1 3h6L4 7z" fill="#222" /></svg></CaretButton>
        </QuickBar>
        <Title>NX 12.0.0.27 - 加工</Title>
        <Brand>SIEMENS</Brand>
      </TitleBar>

      <TabStrip>
        {tabs.map((t, i) => <Tab key={t} $on={i === 0}>{t}</Tab>)}
        <SearchTools>
          <SearchBox>
            <SearchInput placeholder="查找命令" aria-label="查找命令" />
            <Icon name="magnifier" />
          </SearchBox>
          <SmallBtn aria-label="全屏"><Icon name="fullscreen" /></SmallBtn>
          <SmallBtn aria-label="触控"><Icon name="pen" /></SmallBtn>
        </SearchTools>
      </TabStrip>

      <Ribbon>
        <RibbonGroup w={114} name="片" pad={0} left>
          <Big icon="blueCube" label="几何体" shift />
          <Big icon="createOp" label="创建工序" />
          <IconColumn>
            <SmallBtn $h={16} aria-label="创建几何体"><Icon name="newGeom" /></SmallBtn>
            <SmallBtn $h={16} aria-label="创建方法"><Icon name="newMethod" /></SmallBtn>
          </IconColumn>
        </RibbonGroup>
        <RibbonGroup w={55} name="操作">
          <Big icon="props" label="属性" caret />
        </RibbonGroup>
        <RibbonGroup w={311} name="工序">
          <Big icon="genPath" label="生成刀轨" />
          <Big icon="verify" label="确认刀轨" />
          <Big icon="machine" label="机床仿真" />
          <Big icon="post" label="后处理" />
          <Big icon="docs" label="车间文档" />
          <Big icon="moreOp" label="更多" caret boxed />
        </RibbonGroup>
        <RibbonGroup w={125} name="显示" pad={9}>
          <DisplayGrid>
            {displayTools.map(([n, caret, on]) => (
              <Cell key={n}><Tool icon={n} w={23} on={on} caret={caret ? 14 : undefined} /></Cell>
            ))}
          </DisplayGrid>
        </RibbonGroup>
        <RibbonGroup w={136} name="工件" gap={0}>
          <PartGrid>
            {partTools.map((n) => <SmallBtn key={n} $w={18} aria-label={n}><Icon name={n} size={18} /></SmallBtn>)}
          </PartGrid>
          <Big icon="ipw" label="显示 3D IPW" caret />
        </RibbonGroup>
        <RibbonGroup w={150} name="加工工具 - GC工具箱" pad={3}>
          <GcRows>
            <GcRow>
              <Tool icon="gcCheck" /><Tool icon="gcFolder" w={23} /><Tool icon="gcSplit" w={23} /><Tool icon="gcTable" w={23} />
              <Divider $m={2} /><Tool icon="flagHand" />
            </GcRow>
            <GcRow>
              <Tool icon="gcChat" /><Tool icon="gcDoc" w={23} />
              <Divider $m={2} /><Tool icon="gcCalc" w={23} /><Tool icon="gcWrench" w={23} /><Tool icon="gcClock" w={23} /><Tool icon="gcPrint" w={23} />
            </GcRow>
          </GcRows>
        </RibbonGroup>
        <RibbonGroup w={67} name="分析">
          <Big icon="draft" label="拔模分析" caret />
        </RibbonGroup>
        <RibbonGroup w={130} name="几何体">
          <Big icon="plus" label="点" caret />
          <Big icon="extract" label="抽取几何特征" caret />
        </RibbonGroup>
        <RibbonGroup w={172} name="同步建模">
          <Big icon="moveFace" label="移动面" />
          <IconColumn>
            <SmallBtn $h={16}><Icon name="offset" />偏置区域</SmallBtn>
            <Cell><SmallBtn $h={16}><Icon name="replace" />替换面</SmallBtn></Cell>
            <Cell><SmallBtn $h={16}><Icon name="remove" />删除面</SmallBtn></Cell>
          </IconColumn>
          <Big icon="sync" label="更多" caret boxed />
        </RibbonGroup>
        <RibbonGroup w={185} name="特征">
          <Big icon="find" label="查找特征" />
          <Big icon="createFeat" label="创建特征工艺" />
          <Big icon="pinkBox" label="更多" caret boxed />
        </RibbonGroup>
      </Ribbon>

      <SelectionBar>
        <Tool icon="navGroup" on />
        <Tool icon="navTool" />
        <Tool icon="navGeom" w={26} />
        <Tool icon="navMethod" />
        <Divider $m={7} />
        <Tool icon="wave" on />
        <Tool icon="redCube" />
        <Divider $m={7} />
        <Filters>
          <SelectWrap $w={132}>
            <Select aria-label="选择过滤器"><option>无选择过滤器</option></Select>
            <SelectCaret />
          </SelectWrap>
          <SelectWrap $w={139}>
            <Select aria-label="选择范围"><option>整个装配</option></Select>
            <SelectCaret />
          </SelectWrap>
        </Filters>
        <Tool icon="ghostA" />
        <Tool icon="ghostB" />
        <Tool icon="snapBox" caret={12} />
        <Tool icon="snapTurn" w={26} />
        <Tool icon="drillGray" />
        <Tool icon="cubeTarget" />
        <Tool icon="marquee" w={25} caret={12} />
        <Tool icon="shoe" w={25} />
        <Tool icon="glassCube" />
        <Divider $m={7} />
        <Tool icon="fit" w={25} />
        <Tool icon="pan" w={25} />
        <Tool icon="rotate" w={25} />
        <Tool icon="bluePrism" w={25} />
        <Tool icon="ghostDoc" w={25} />
        <Tool icon="grid" caret={12} />
        <Tool icon="shade" caret={14} />
        <Tool icon="solid" caret={12} />
        <Tool icon="clip" caret={14} />
        <Divider $m={6} />
      </SelectionBar>

      <Workspace>
        <Navigator>
          <NavTitle>
            <h2>器 - 程序顺序</h2>
            <MaximizeButton aria-label="最大化" />
          </NavTitle>
          <TreeArea>
            <TreeTable>
              <colgroup><col width="144" /><col width="100" /><col width="50" /><col width="10" /></colgroup>
              <thead><tr><Th /><Th>换刀</Th><Th>刀轨</Th><Th>刀</Th></tr></thead>
              <tbody>
                <Tr $kind="group"><Td><RowName $cut={4}>GRAM</RowName></Td><Td /><Td /><Td /></Tr>
                <Tr $kind="group"><Td><RowName $cut={6}>用项</RowName></Td><Td /><Td /><Td /></Tr>
                <Tr $kind="selected"><Td><RowName>PROGRAM</RowName></Td><Td /><Td /><Td /></Tr>
                {operations.map(([name, tool]) => (
                  <Tr key={name} $kind="op">
                    <Td><RowName $cut={3}><Icon name="opRow" />{name}</RowName></Td>
                    <Td><Icon name="tool" size={14} /></Td>
                    <Td><Icon name="done" size={14} /></Td>
                    <Td>{tool}</Td>
                  </Tr>
                ))}
                {Array.from({ length: 30 }, (_, i) => <Tr key={i}><Td /><Td /><Td /><Td /></Tr>)}
              </tbody>
            </TreeTable>
          </TreeArea>
          <ScrollTrack>
            <ScrollThumb />
            <ScrollArrow aria-label="向右滚动"><svg width="8" height="10" viewBox="0 0 8 10"><path d="M2 1l4 4-4 4" fill="none" stroke="#444" strokeWidth="1.5" /></svg></ScrollArrow>
          </ScrollTrack>
          <Drawers>
            {["相关性", "细节"].map((n) => (
              <Drawer key={n} aria-label={n}><svg width="12" height="10" viewBox="0 0 12 10"><path d="M2 1l4 7 4-7" fill="none" stroke="#0f7466" strokeWidth="1.8" /></svg></Drawer>
            ))}
          </Drawers>
        </Navigator>
        <Stage>
          <FileTabs>
            <FileTab>
              <Icon name="mill" />
              <FileName>_model1.prt</FileName>
              <Icon name="pin" size={13} />
              <SmallBtn $w={18} aria-label="关闭"><svg width="9" height="9" viewBox="0 0 9 9"><path d="M1 1l7 7M8 1L1 8" stroke="#fff" strokeWidth="2" /></svg></SmallBtn>
            </FileTab>
          </FileTabs>
          <Viewport><Scene /></Viewport>
        </Stage>
      </Workspace>

      <StatusBar>全部 1</StatusBar>

      <Taskbar>
        <RoundTask aria-label="开始"><Icon name="start" size={22} /></RoundTask>
        <RoundTask aria-label="搜索"><Icon name="searchTask" size={20} /></RoundTask>
        <TaskButtons>
          <TaskButton $w={152}><Icon name="ppt" size={24} />UG12.0编程.ppt * ...</TaskButton>
          <TaskButton $w={160} $on><Icon name="nx" size={24} />NX 12.0.0.27 - 加工</TaskButton>
          <TaskButton $w={152}><Icon name="rec" size={24} />Recording...</TaskButton>
        </TaskButtons>
        <Tray>
          <TrayIcons>
            <Icon name="chevronUp" size={14} />
            <Icon name="penguin" />
            <Icon name="penguin" />
            <Icon name="guard" />
            <Icon name="network" />
          </TrayIcons>
          <Icon name="sogou" />
          <Clock>8:11 周二<br />2021/11/16</Clock>
        </Tray>
      </Taskbar>

      <Caption>呷得苦，耐得烦，不怕死，霸得蛮，敢为人先！</Caption>
      <ImeBar>
        <Icon name="sogou" size={30} />
        <Divider $h={28} $m={7} />
        <ImeMode>英</ImeMode>
        <ImeMode>•,</ImeMode>
        <ImeMode>•</ImeMode>
      </ImeBar>
      <ClickDot />
      <NoticeDot />
      <Pointer width="14" height="20" viewBox="0 0 14 20"><path d="M1 1v15l4-3 2 5 3-1-3-5h6z" fill="#fff" stroke="#111" /></Pointer>
    </Window>
  );
}
